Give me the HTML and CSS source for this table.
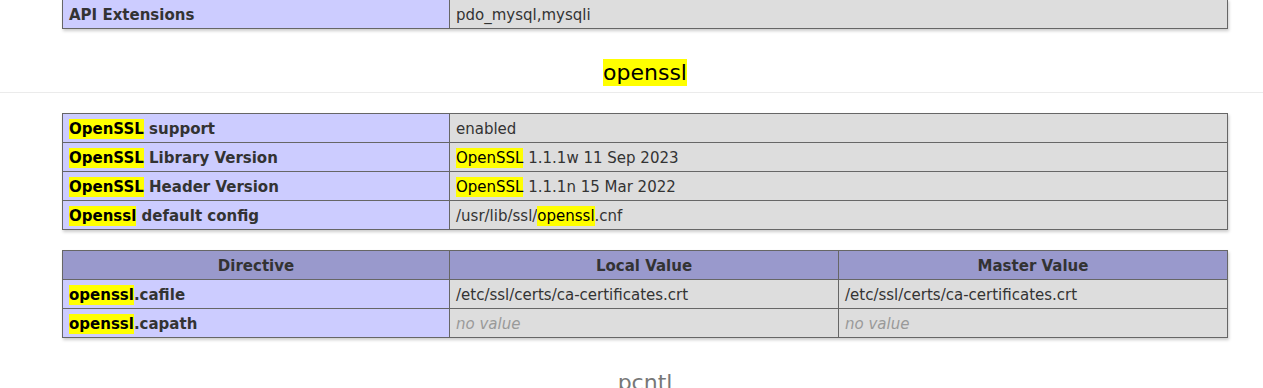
FILE: index.html
```html
<!DOCTYPE html>
<html>
<head>
<meta charset="utf-8">
<link rel="stylesheet" href="styles.css">
</head>
<body>
<div class="page">
  <table class="info first">
    <colgroup><col class="ce"><col></colgroup>
    <tr><td class="e">API Extensions</td><td class="v">pdo_mysql,mysqli</td></tr>
  </table>

  <h2 class="mod"><span class="hl">openssl</span></h2>
  <div class="rule"></div>

  <table class="info">
    <colgroup><col class="ce"><col></colgroup>
    <tr><td class="e"><span class="hl">OpenSSL</span> support</td><td class="v">enabled</td></tr>
    <tr><td class="e"><span class="hl">OpenSSL</span> Library Version</td><td class="v"><span class="hl">OpenSSL</span> 1.1.1w  11 Sep 2023</td></tr>
    <tr><td class="e"><span class="hl">OpenSSL</span> Header Version</td><td class="v"><span class="hl">OpenSSL</span> 1.1.1n  15 Mar 2022</td></tr>
    <tr><td class="e"><span class="hl">Openssl</span> default config</td><td class="v">/usr/lib/ssl/<span class="hl">openssl</span>.cnf</td></tr>
  </table>

  <table class="info">
    <colgroup><col class="ce"><col class="c2"><col></colgroup>
    <tr class="h"><th>Directive</th><th>Local Value</th><th>Master Value</th></tr>
    <tr><td class="e"><span class="hl">openssl</span>.cafile</td><td class="v">/etc/ssl/certs/ca-certificates.crt</td><td class="v">/etc/ssl/certs/ca-certificates.crt</td></tr>
    <tr><td class="e"><span class="hl">openssl</span>.capath</td><td class="v"><i>no value</i></td><td class="v"><i>no value</i></td></tr>
  </table>

  <h2 class="mod dim">pcntl</h2>
</div>
</body>
</html>
```

FILE: styles.css
```css
html, body {
  margin: 0;
  padding: 0;
  background: #fff;
  overflow: hidden;
}
body {
  font-family: "DejaVu Sans", Verdana, sans-serif;
  color: #222;
}
.page {
  padding-left: 27px;
}
.info {
  border-collapse: collapse;
  table-layout: fixed;
  width: 1166px;
  margin: 20px auto;
  box-shadow: 1px 2px 3px #ccc;
  text-align: left;
}
.info.first {
  margin-top: -1px;
  margin-bottom: 0;
}
.ce {
  width: 387px;
}
.c2 {
  width: 389px;
}
.info td, .info th {
  border: 1px solid #666;
  font-size: 15px;
  line-height: 18px;
  padding: 6px 6px 4px;
  vertical-align: baseline;
  overflow: hidden;
}
.e {
  background: #ccf;
  font-weight: bold;
  color: #333;
}
.v {
  background: #ddd;
  color: #333;
}
.v i {
  color: #999;
}
.h th {
  background: #99c;
  font-weight: bold;
  text-align: center;
  color: #333;
}
.hl {
  background: #ff0;
  color: #000;
  padding: 1px 0;
}
.mod {
  font-size: 22px;
  line-height: 28px;
  font-weight: normal;
  text-align: center;
  margin: 30px 0 5px;
  color: #000;
}
.mod.dim {
  color: #777;
  margin-top: 31px;
}
.rule {
  height: 1px;
  background: #ebebeb;
  margin-left: -27px;
}
```
